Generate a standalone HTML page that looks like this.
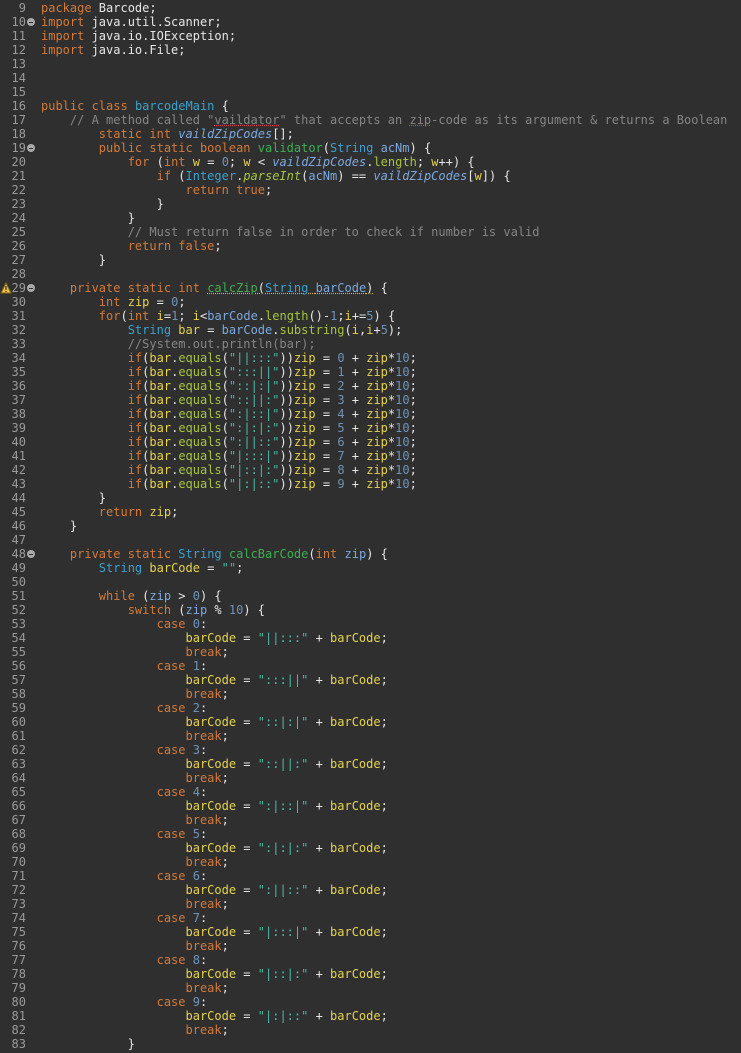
<!DOCTYPE html>
<html><head><meta charset="utf-8"><style>
body{margin:0;background:#2f2f2f;width:741px;height:1053px;overflow:hidden}
.w{position:relative;padding-top:1px;font-family:"DejaVu Sans Mono","Liberation Mono",monospace;font-size:12px;line-height:14px}
.g{position:absolute;left:0;top:1px;width:26px;text-align:right;color:#9a9a9a}
pre{margin:0;position:absolute;left:41px;top:1px;font:inherit;color:#e6e6e6}
.k{color:#d27a3a}.t{color:#3d9fcc}.p{color:#7ba8de}.v{color:#e6d24f}.f{color:#7ba8de;font-style:italic}
.m{color:#3fae52}.c{color:#a6c43f}.ci{color:#a6c43f;font-style:italic}.n{color:#6f93b8}.s{color:#4fb8a8}.cm{color:#858585}
.fold{position:absolute;left:27px;width:8px;height:8px;border-radius:50%;background:#aaa}
.fold:after{content:"";position:absolute;left:2px;top:3.5px;width:4px;height:1px;background:#2f2f2f}
.u{text-decoration:underline dotted #d6b040}
.ur{text-decoration:underline dotted #d44}
</style></head><body><div class="w">
<div class="g">9<br>10<br>11<br>12<br>13<br>14<br>15<br>16<br>17<br>18<br>19<br>20<br>21<br>22<br>23<br>24<br>25<br>26<br>27<br>28<br>29<br>30<br>31<br>32<br>33<br>34<br>35<br>36<br>37<br>38<br>39<br>40<br>41<br>42<br>43<br>44<br>45<br>46<br>47<br>48<br>49<br>50<br>51<br>52<br>53<br>54<br>55<br>56<br>57<br>58<br>59<br>60<br>61<br>62<br>63<br>64<br>65<br>66<br>67<br>68<br>69<br>70<br>71<br>72<br>73<br>74<br>75<br>76<br>77<br>78<br>79<br>80<br>81<br>82<br>83</div>
<div class="fold" style="top:18px"></div>
<div class="fold" style="top:144px"></div>
<div class="fold" style="top:284px"></div>
<div class="fold" style="top:550px"></div>
<svg style="position:absolute;left:0;top:282px" width="12" height="12"><path d="M6 1L11 11H1Z" fill="#e8c040" stroke="#8a6a10"/><rect x="5.4" y="4" width="1.2" height="4" fill="#333"/><rect x="5.4" y="9" width="1.2" height="1" fill="#333"/></svg>
<pre><span class="k">package</span> Barcode;
<span class="k">import</span> java.util.Scanner;
<span class="k">import</span> java.io.IOException;
<span class="k">import</span> java.io.File;



<span class="k">public class</span> <span class="t">barcodeMain</span> {
    <span class="cm">// A method called "<span class="ur">vaildator</span>" that accepts an <span class="ur">zip</span>-code as its argument &amp; returns a Boolean</span>
        <span class="k">static int</span> <span class="f">vaildZipCodes</span>[];
        <span class="k">public static boolean</span> <span class="m">validator</span>(<span class="t">String</span> <span class="p">acNm</span>) {
            <span class="k">for</span> (<span class="k">int</span> <span class="v">w</span> = <span class="n">0</span>; <span class="v">w</span> &lt; <span class="f">vaildZipCodes</span>.<span class="c">length</span>; <span class="v">w</span>++) {
                <span class="k">if</span> (<span class="t">Integer</span>.<span class="ci">parseInt</span>(<span class="p">acNm</span>) == <span class="f">vaildZipCodes</span>[<span class="v">w</span>]) {
                    <span class="k">return true</span>;
                }
            }
            <span class="cm">// Must return false in order to check if number is valid</span>
            <span class="k">return false</span>;
        }

    <span class="k">private static int</span> <span class="m u">calcZip</span><span class="u">(</span><span class="t u">String</span><span class="u"> </span><span class="p u">barCode</span><span class="u">)</span> {
        <span class="k">int</span> <span class="v">zip</span> = <span class="n">0</span>;
        <span class="k">for</span>(<span class="k">int</span> <span class="v">i</span>=<span class="n">1</span>; <span class="v">i</span>&lt;<span class="p">barCode</span>.<span class="c">length</span>()-<span class="n">1</span>;<span class="v">i</span>+=<span class="n">5</span>) {
            <span class="t">String</span> <span class="v">bar</span> = <span class="p">barCode</span>.<span class="c">substring</span>(<span class="v">i</span>,<span class="v">i</span>+<span class="n">5</span>);
            <span class="cm">//System.out.println(bar);</span>
            <span class="k">if</span>(<span class="v">bar</span>.<span class="c">equals</span>(<span class="s">"||:::"</span>))<span class="v">zip</span> = <span class="n">0</span> + <span class="v">zip</span>*<span class="n">10</span>;
            <span class="k">if</span>(<span class="v">bar</span>.<span class="c">equals</span>(<span class="s">":::||"</span>))<span class="v">zip</span> = <span class="n">1</span> + <span class="v">zip</span>*<span class="n">10</span>;
            <span class="k">if</span>(<span class="v">bar</span>.<span class="c">equals</span>(<span class="s">"::|:|"</span>))<span class="v">zip</span> = <span class="n">2</span> + <span class="v">zip</span>*<span class="n">10</span>;
            <span class="k">if</span>(<span class="v">bar</span>.<span class="c">equals</span>(<span class="s">"::||:"</span>))<span class="v">zip</span> = <span class="n">3</span> + <span class="v">zip</span>*<span class="n">10</span>;
            <span class="k">if</span>(<span class="v">bar</span>.<span class="c">equals</span>(<span class="s">":|::|"</span>))<span class="v">zip</span> = <span class="n">4</span> + <span class="v">zip</span>*<span class="n">10</span>;
            <span class="k">if</span>(<span class="v">bar</span>.<span class="c">equals</span>(<span class="s">":|:|:"</span>))<span class="v">zip</span> = <span class="n">5</span> + <span class="v">zip</span>*<span class="n">10</span>;
            <span class="k">if</span>(<span class="v">bar</span>.<span class="c">equals</span>(<span class="s">":||::"</span>))<span class="v">zip</span> = <span class="n">6</span> + <span class="v">zip</span>*<span class="n">10</span>;
            <span class="k">if</span>(<span class="v">bar</span>.<span class="c">equals</span>(<span class="s">"|:::|"</span>))<span class="v">zip</span> = <span class="n">7</span> + <span class="v">zip</span>*<span class="n">10</span>;
            <span class="k">if</span>(<span class="v">bar</span>.<span class="c">equals</span>(<span class="s">"|::|:"</span>))<span class="v">zip</span> = <span class="n">8</span> + <span class="v">zip</span>*<span class="n">10</span>;
            <span class="k">if</span>(<span class="v">bar</span>.<span class="c">equals</span>(<span class="s">"|:|::"</span>))<span class="v">zip</span> = <span class="n">9</span> + <span class="v">zip</span>*<span class="n">10</span>;
        }
        <span class="k">return</span> <span class="v">zip</span>;
    }

    <span class="k">private static</span> <span class="t">String</span> <span class="m">calcBarCode</span>(<span class="k">int</span> <span class="p">zip</span>) {
        <span class="t">String</span> <span class="v">barCode</span> = <span class="s">""</span>;

        <span class="k">while</span> (<span class="p">zip</span> &gt; <span class="n">0</span>) {
            <span class="k">switch</span> (<span class="p">zip</span> % <span class="n">10</span>) {
                <span class="k">case</span> <span class="n">0</span>:
                    <span class="v">barCode</span> = <span class="s">"||:::"</span> + <span class="v">barCode</span>;
                    <span class="k">break</span>;
                <span class="k">case</span> <span class="n">1</span>:
                    <span class="v">barCode</span> = <span class="s">":::||"</span> + <span class="v">barCode</span>;
                    <span class="k">break</span>;
                <span class="k">case</span> <span class="n">2</span>:
                    <span class="v">barCode</span> = <span class="s">"::|:|"</span> + <span class="v">barCode</span>;
                    <span class="k">break</span>;
                <span class="k">case</span> <span class="n">3</span>:
                    <span class="v">barCode</span> = <span class="s">"::||:"</span> + <span class="v">barCode</span>;
                    <span class="k">break</span>;
                <span class="k">case</span> <span class="n">4</span>:
                    <span class="v">barCode</span> = <span class="s">":|::|"</span> + <span class="v">barCode</span>;
                    <span class="k">break</span>;
                <span class="k">case</span> <span class="n">5</span>:
                    <span class="v">barCode</span> = <span class="s">":|:|:"</span> + <span class="v">barCode</span>;
                    <span class="k">break</span>;
                <span class="k">case</span> <span class="n">6</span>:
                    <span class="v">barCode</span> = <span class="s">":||::"</span> + <span class="v">barCode</span>;
                    <span class="k">break</span>;
                <span class="k">case</span> <span class="n">7</span>:
                    <span class="v">barCode</span> = <span class="s">"|:::|"</span> + <span class="v">barCode</span>;
                    <span class="k">break</span>;
                <span class="k">case</span> <span class="n">8</span>:
                    <span class="v">barCode</span> = <span class="s">"|::|:"</span> + <span class="v">barCode</span>;
                    <span class="k">break</span>;
                <span class="k">case</span> <span class="n">9</span>:
                    <span class="v">barCode</span> = <span class="s">"|:|::"</span> + <span class="v">barCode</span>;
                    <span class="k">break</span>;
            }</pre>
</div></body></html>
